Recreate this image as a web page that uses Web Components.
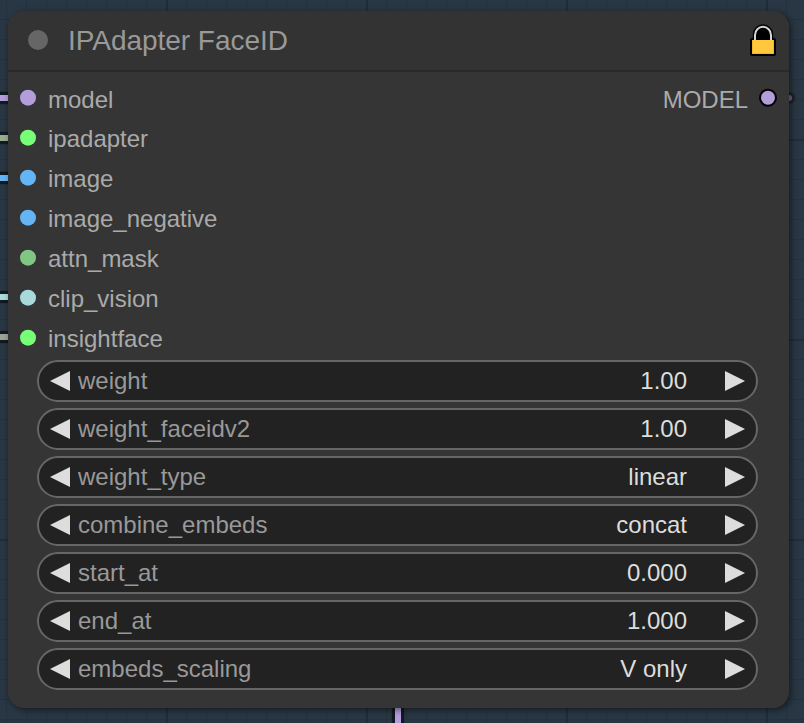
<!DOCTYPE html>
<html lang="en">
<head>
<meta charset="utf-8">
<title>IPAdapter FaceID</title>
<style>
  html, body {
    margin: 0;
    height: 100%;
    overflow: hidden;
    background: #283640;
    font-family: Arial, "Liberation Sans", sans-serif;
  }
</style>
</head>
<body>
<graph-canvas>
  <link-stub style="left: 0; top: 95px; width: 10px" color="#b39ddb"></link-stub>
  <link-stub style="left: 0; top: 135px; width: 10px" color="#9aab92"></link-stub>
  <link-stub style="left: 0; top: 175px; width: 10px" color="#64b5f6"></link-stub>
  <link-stub style="left: 0; top: 294px; width: 10px" color="#a8dadc"></link-stub>
  <link-stub style="left: 0; top: 334px; width: 10px" color="#9aa395"></link-stub>
  <link-stub style="left: 395px; top: 704px; height: 19px" color="#b39ddb" vertical></link-stub>
  <link-stub style="left: 780px; top: 95px; width: 12px" color="#75668c" end></link-stub>
  <graph-node label="IPAdapter FaceID">
    <node-slot slot="input" name="model" color="#b39ddb"></node-slot>
    <node-slot slot="input" name="ipadapter" color="#77ff77"></node-slot>
    <node-slot slot="input" name="image" color="#64b5f6"></node-slot>
    <node-slot slot="input" name="image_negative" color="#64b5f6"></node-slot>
    <node-slot slot="input" name="attn_mask" color="#81c784"></node-slot>
    <node-slot slot="input" name="clip_vision" color="#a8dadc"></node-slot>
    <node-slot slot="input" name="insightface" color="#77ff77"></node-slot>
    <node-slot slot="output" name="MODEL" color="#b39ddb" output></node-slot>
    <node-widget name="weight" value="1.00"></node-widget>
    <node-widget name="weight_faceidv2" value="1.00"></node-widget>
    <node-widget name="weight_type" value="linear"></node-widget>
    <node-widget name="combine_embeds" value="concat"></node-widget>
    <node-widget name="start_at" value="0.000"></node-widget>
    <node-widget name="end_at" value="1.000"></node-widget>
    <node-widget name="embeds_scaling" value="V only"></node-widget>
  </graph-node>
</graph-canvas>

<script>
class GraphCanvas extends HTMLElement {
  constructor() {
    super();
    this.attachShadow({ mode: 'open' }).innerHTML = `
      <style>
        :host {
          display: block;
          position: relative;
          box-sizing: border-box;
          width: 804px;
          height: 723px;
          padding: 11px 15px 15px 8px;
          overflow: hidden;
          background-color: #283743;
          background-image:
            linear-gradient(90deg, #202d38 2px, transparent 2px),
            linear-gradient(#202d38 2px, transparent 2px),
            linear-gradient(90deg, #24323e 1px, transparent 1px),
            linear-gradient(#24323e 1px, transparent 1px);
          background-size: 200px 200px, 200px 200px, 20px 20px, 20px 20px;
          background-position: 166px 0, 0 139px, 6px 0, 0 19px;
        }
      </style>
      <slot></slot>
    `;
  }
}

class LinkStub extends HTMLElement {
  constructor() {
    super();
    this.attachShadow({ mode: 'open' });
  }

  connectedCallback() {
    this.shadowRoot.innerHTML = `
      <style>
        :host {
          display: block;
          position: absolute;
          height: 6px;
          background: ${this.getAttribute('color')};
          box-shadow: 0 0 1px 3px #111a20;
        }
        :host([vertical]) {
          width: 6px;
        }
        :host([end]) {
          border-radius: 0 3px 3px 0;
          box-shadow: 0 0 1px 3px #1c2329;
        }
      </style>
    `;
  }
}

class GraphNode extends HTMLElement {
  constructor() {
    super();
    this.attachShadow({ mode: 'open' });
  }

  connectedCallback() {
    this.shadowRoot.innerHTML = `
      <style>
        :host {
          display: flex;
          flex-direction: column;
          position: relative;
          box-sizing: border-box;
          height: 697px;
          border-radius: 16px;
          background: #353535;
          box-shadow: 2px 2px 6px rgba(0, 0, 0, 0.5);
        }
        header {
          display: flex;
          align-items: center;
          box-sizing: border-box;
          height: 61px;
          padding: 0 12px 2px 20px;
          border-bottom: 2px solid #2a2a2a;
          border-radius: 16px 16px 0 0;
          background: #333;
        }
        .dot {
          width: 20px;
          height: 20px;
          border-radius: 50%;
          background: #666;
        }
        .title {
          flex: 1;
          margin-left: 20px;
          padding-top: 2px;
          font-size: 28px;
          line-height: 32px;
          letter-spacing: -0.04px;
          color: #999;
        }
        svg {
          display: block;
        }
        .slots {
          display: flex;
          justify-content: space-between;
          height: 288px;
          padding: 6px 13px 0 12px;
          box-sizing: border-box;
        }
        .widgets {
          display: flex;
          flex-direction: column;
          gap: 6px;
          padding: 0 31.5px 0 29px;
        }
      </style>
      <header>
        <span class="dot"></span>
        <span class="title">${this.getAttribute('label')}</span>
        <svg width="28" height="34" viewBox="0 0 28 34">
          <path d="M5 17V11.5a9 9 0 0 1 18 0V17z" fill="#000" stroke="#000" stroke-width="2.4"/>
          <rect x="1" y="15" width="26" height="18" rx="2" fill="#000"/>
          <path d="M6 17V12a8 8.2 0 0 1 16 0v5" fill="none" stroke="#d4d4d4" stroke-width="2"/>
          <rect x="3" y="17" width="22" height="14" fill="#ffc83d"/>
          <path d="M3.5 17V30.5H24.5V17" fill="none" stroke="#f3b033" stroke-width="1"/>
        </svg>
      </header>
      <div class="slots">
        <div><slot name="input"></slot></div>
        <div><slot name="output"></slot></div>
      </div>
      <div class="widgets"><slot></slot></div>
    `;
  }
}

class NodeSlot extends HTMLElement {
  constructor() {
    super();
    this.attachShadow({ mode: 'open' });
  }

  connectedCallback() {
    this.shadowRoot.innerHTML = `
      <style>
        :host {
          display: flex;
          align-items: center;
          gap: 12px;
          height: 40px;
          font-size: 24px;
          line-height: 28px;
          color: #aaa;
        }
        :host([output]) {
          flex-direction: row-reverse;
        }
        svg {
          display: block;
          margin-top: -1px;
          overflow: visible;
        }
        span {
          padding-top: 1px;
        }
        :host([name="model" i]) span {
          padding-top: 3px;
        }
      </style>
      <svg width="16" height="16">
        <circle cx="8" cy="7.7" r="8" fill="${this.getAttribute('color')}"
          ${this.hasAttribute('output') ? 'stroke="#000" stroke-width="2"' : ''}/>
      </svg>
      <span>${this.getAttribute('name')}</span>
    `;
  }
}

class NodeWidget extends HTMLElement {
  constructor() {
    super();
    this.attachShadow({ mode: 'open' });
  }

  connectedCallback() {
    this.shadowRoot.innerHTML = `
      <style>
        :host {
          display: flex;
          align-items: center;
          box-sizing: border-box;
          height: 42px;
          padding: 0 11px;
          border: 2px solid #666;
          border-radius: 21px;
          background: #222;
          font-size: 24px;
          line-height: 28px;
        }
        svg {
          display: block;
          fill: #ddd;
        }
        .name {
          flex: 1;
          margin-left: 8px;
          color: #999;
        }
        .value {
          margin-right: 37.5px;
          color: #ddd;
        }
      </style>
      <svg width="20" height="20"><path d="M0 10L20 0V20z"/></svg>
      <span class="name">${this.getAttribute('name')}</span>
      <span class="value">${this.getAttribute('value')}</span>
      <svg width="20" height="20"><path d="M20 10L0 0V20z"/></svg>
    `;
  }
}

customElements.define('graph-canvas', GraphCanvas);
customElements.define('link-stub', LinkStub);
customElements.define('graph-node', GraphNode);
customElements.define('node-slot', NodeSlot);
customElements.define('node-widget', NodeWidget);
</script>
</body>
</html>
